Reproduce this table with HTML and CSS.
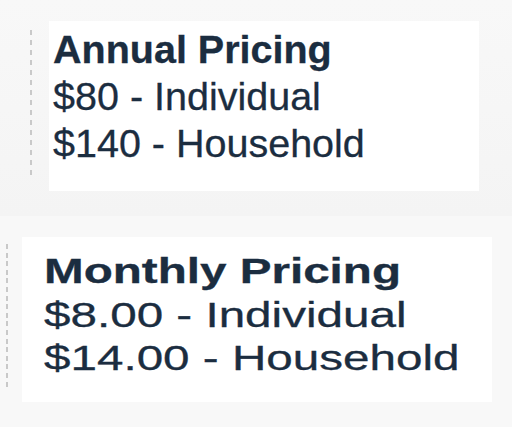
FILE: index.html
```html
<!DOCTYPE html>
<html>
<head>
<meta charset="utf-8">
<link rel="stylesheet" href="styles.css">
</head>
<body>
<section class="band band-annual">
  <div class="rule rule-annual"></div>
  <div class="card card-annual">
    <div class="text-annual">
      <div class="title">Annual Pricing</div>
      <div>$80 - Individual</div>
      <div>$140 - Household</div>
    </div>
  </div>
</section>
<section class="band band-monthly">
  <div class="rule rule-monthly"></div>
  <div class="card card-monthly">
    <div class="text-monthly">
      <div class="title">Monthly Pricing</div>
      <div>$8.00 - Individual</div>
      <div>$14.00 - Household</div>
    </div>
  </div>
</section>
</body>
</html>
```

FILE: styles.css
```css
html, body {
  margin: 0;
  padding: 0;
}
body {
  width: 512px;
  height: 427px;
  overflow: hidden;
  background: #f7f7f7;
  font-family: "Liberation Sans", Arial, sans-serif;
  color: #1b2d40;
}
.band {
  display: flex;
  align-items: flex-start;
}
.band-annual {
  height: 216px;
  padding: 21px 0 0 30px;
  box-sizing: border-box;
  background: linear-gradient(#f8f8f8, #f4f4f4);
}
.band-monthly {
  height: 211px;
  padding: 21px 0 0 6px;
  box-sizing: border-box;
  background: #f8f8f8;
}
.rule {
  width: 2px;
  flex: none;
}
.rule-annual {
  margin-top: 9px;
  height: 147px;
  margin-right: 17px;
  background: repeating-linear-gradient(#c9c9c9 0 5px, transparent 5px 10px);
}
.rule-monthly {
  margin-top: 7px;
  height: 146px;
  margin-right: 14px;
  background: repeating-linear-gradient(#c9c9c9 0 5px, transparent 5px 8.6px);
}
.card {
  background: #ffffff;
  box-sizing: border-box;
  flex: none;
}
.card-annual {
  width: 430px;
  height: 170px;
  padding: 5px 0 0 4px;
}
.card-monthly {
  width: 470px;
  height: 165px;
  padding: 12px 0 0 22px;
}
.text-annual {
  font-size: 39.5px;
  line-height: 47px;
  -webkit-text-stroke: 0.3px #1b2d40;
}
.text-monthly {
  width: 310px;
  font-size: 35px;
  line-height: 43.5px;
  white-space: nowrap;
  transform: scaleX(1.36);
  transform-origin: left top;
  -webkit-text-stroke: 0.3px #1b2d40;
}
.title {
  font-weight: bold;
}
```
